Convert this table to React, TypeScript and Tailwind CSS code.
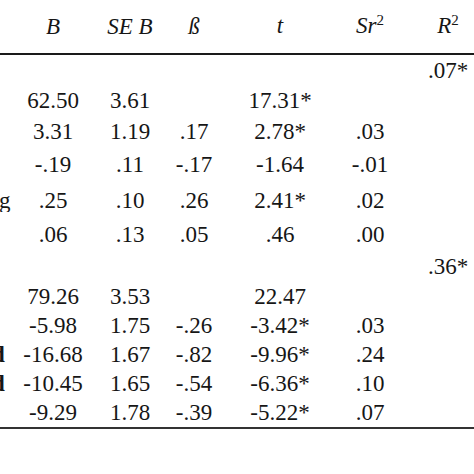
import React from "react";

type Row = {
  h: string;
  label?: React.ReactNode;
  b?: string;
  se?: string;
  beta?: string;
  t?: string;
  sr?: string;
  r2?: string;
};

const rows: Row[] = [
  { h: "h-[29px]", r2: ".07*" },
  { h: "h-[30px]", b: "62.50", se: "3.61", t: "17.31*" },
  { h: "h-[32px]", b: "3.31", se: "1.19", beta: ".17", t: "2.78*", sr: ".03" },
  { h: "h-[35px]", b: "-.19", se: ".11", beta: "-.17", t: "-1.64", sr: "-.01" },
  { h: "h-[36px]", label: <span className="-ml-[1px]">g</span>, b: ".25", se: ".10", beta: ".26", t: "2.41*", sr: ".02" },
  { h: "h-[33px]", b: ".06", se: ".13", beta: ".05", t: ".46", sr: ".00" },
  { h: "h-[30px]", r2: ".36*" },
  { h: "h-[30px]", b: "79.26", se: "3.53", t: "22.47" },
  { h: "h-[29px]", b: "-5.98", se: "1.75", beta: "-.26", t: "-3.42*", sr: ".03" },
  { h: "h-[29px]", label: <span className="-ml-[8px] font-bold">d</span>, b: "-16.68", se: "1.67", beta: "-.82", t: "-9.96*", sr: ".24" },
  { h: "h-[29px]", label: <span className="-ml-[8px] font-bold">d</span>, b: "-10.45", se: "1.65", beta: "-.54", t: "-6.36*", sr: ".10" },
  { h: "h-[29px]", b: "-9.29", se: "1.78", beta: "-.39", t: "-5.22*", sr: ".07" },
];

function Cells({ r }: { r: Row }) {
  return (
    <>
      <div className="w-[14px] shrink-0 overflow-hidden whitespace-nowrap">{r.label}</div>
      <div className="w-[78px] shrink-0 text-center">{r.b}</div>
      <div className="w-[76px] shrink-0 text-center">{r.se}</div>
      <div className="w-[52px] shrink-0 text-center">{r.beta}</div>
      <div className="w-[120px] shrink-0 text-center">{r.t}</div>
      <div className="w-[60px] shrink-0 text-center">{r.sr}</div>
      <div className="w-[74px] shrink-0 pl-[22px] text-center">{r.r2}</div>
    </>
  );
}

export default function App() {
  return (
    <div
      className="w-[474px] h-[474px] overflow-hidden bg-white text-[#161616] text-[23px] leading-none"
      style={{ fontFamily: '"Liberation Serif", "Times New Roman", serif' }}
    >
      {/* header */}
      <div className="flex items-center h-[53px] italic">
        <div className="w-[14px] shrink-0" />
        <div className="w-[78px] shrink-0 text-center">B</div>
        <div className="w-[76px] shrink-0 text-center">SE B</div>
        <div className="w-[52px] shrink-0 text-center">ß</div>
        <div className="w-[120px] shrink-0 text-center -mt-[2px]">t</div>
        <div className="w-[60px] shrink-0 text-center -mt-[2px]">
          Sr<sup className="not-italic text-[15px] -top-[8px]">2</sup>
        </div>
        <div className="w-[74px] shrink-0 pl-[22px] text-center -mt-[2px]">
          R<sup className="not-italic text-[15px] -top-[8px]">2</sup>
        </div>
      </div>
      <div className="h-[2px] bg-[#1a1a1a]" />
      <div className="h-[1px]" />

      {rows.map((r, i) => (
        <div key={i} className={`flex items-center ${r.h}`}>
          <Cells r={r} />
        </div>
      ))}

      <div className="h-[2px] bg-[#333]" />
    </div>
  );
}
